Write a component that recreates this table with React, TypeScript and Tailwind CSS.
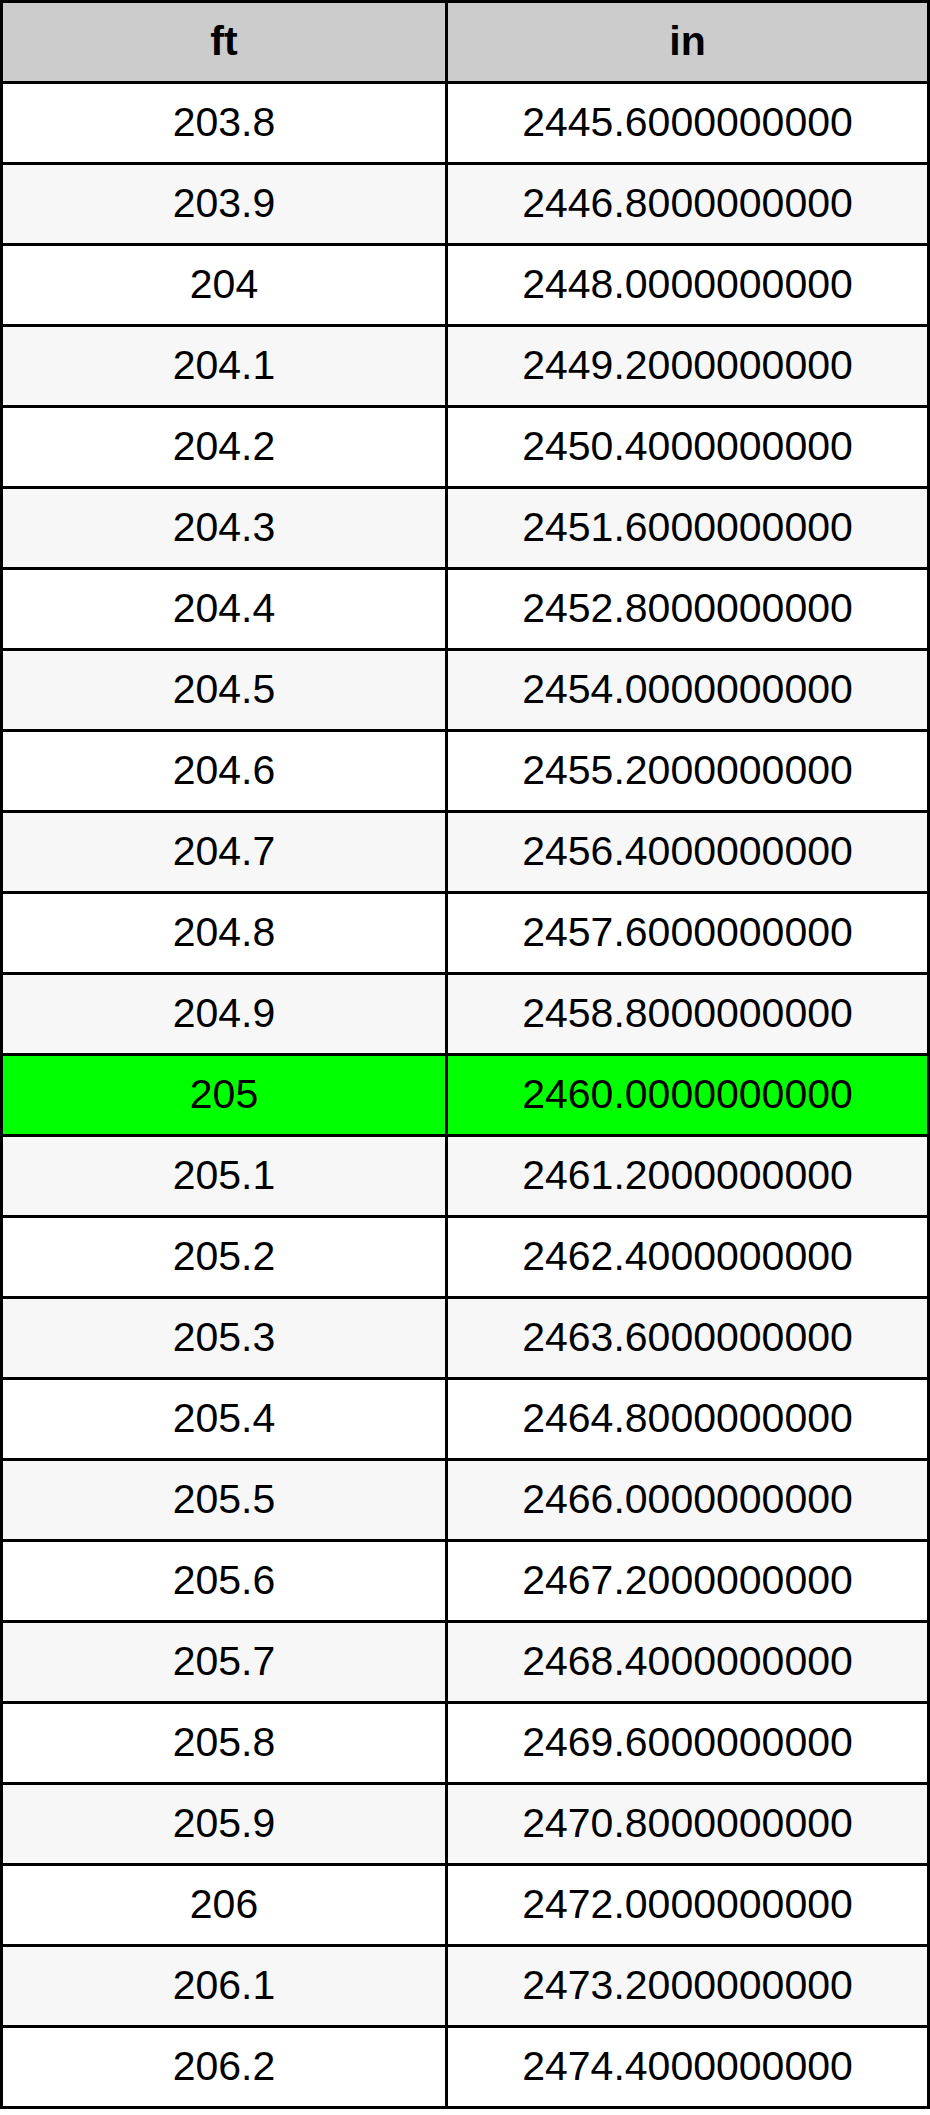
import React from "react";

const rows: [string, string][] = [
  ["203.8", "2445.6000000000"],
  ["203.9", "2446.8000000000"],
  ["204", "2448.0000000000"],
  ["204.1", "2449.2000000000"],
  ["204.2", "2450.4000000000"],
  ["204.3", "2451.6000000000"],
  ["204.4", "2452.8000000000"],
  ["204.5", "2454.0000000000"],
  ["204.6", "2455.2000000000"],
  ["204.7", "2456.4000000000"],
  ["204.8", "2457.6000000000"],
  ["204.9", "2458.8000000000"],
  ["205", "2460.0000000000"],
  ["205.1", "2461.2000000000"],
  ["205.2", "2462.4000000000"],
  ["205.3", "2463.6000000000"],
  ["205.4", "2464.8000000000"],
  ["205.5", "2466.0000000000"],
  ["205.6", "2467.2000000000"],
  ["205.7", "2468.4000000000"],
  ["205.8", "2469.6000000000"],
  ["205.9", "2470.8000000000"],
  ["206", "2472.0000000000"],
  ["206.1", "2473.2000000000"],
  ["206.2", "2474.4000000000"],
];

export default function App() {
  return (
    <div
      className="w-[930px] bg-white text-black"
      style={{ fontFamily: '"Liberation Sans", Arial, sans-serif' }}
    >
      <div className="flex flex-col border-[3px] border-black">
        <div className="flex h-[78px] bg-[#cccccc] text-[41px] font-bold">
          <div className="flex w-[445px] items-center justify-center border-r-[3px] border-black">
            ft
          </div>
          <div className="flex flex-1 items-center justify-center">in</div>
        </div>
        {rows.map(([ft, inch], i) => {
          const bg =
            ft === "205"
              ? "bg-[#00ff00]"
              : i % 2 === 1
              ? "bg-[#f7f7f7]"
              : "bg-white";
          return (
            <div
              key={ft}
              className={`flex h-[81px] border-t-[3px] border-black text-[41px] ${bg}`}
            >
              <div className="flex w-[445px] items-center justify-center border-r-[3px] border-black">
                {ft}
              </div>
              <div className="flex flex-1 items-center justify-center">
                {inch}
              </div>
            </div>
          );
        })}
      </div>
    </div>
  );
}
